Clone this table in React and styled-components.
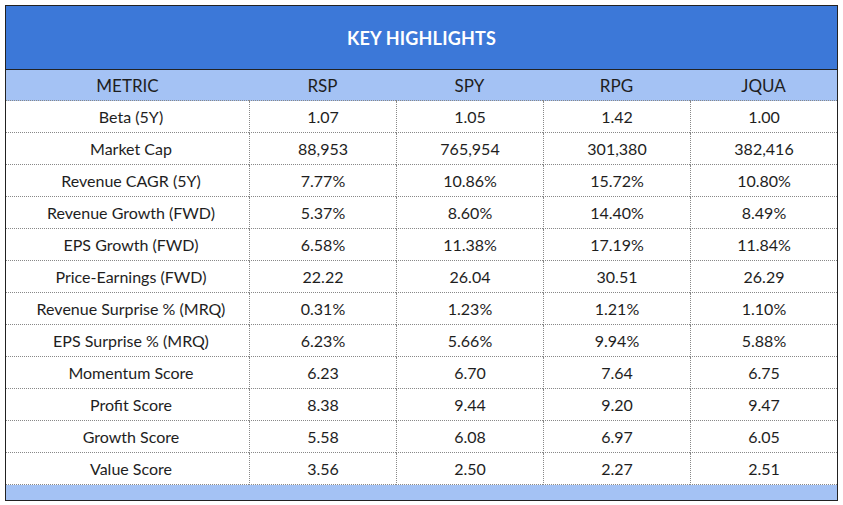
import React from 'react';
import styled, { createGlobalStyle } from 'styled-components';

const GlobalStyle = createGlobalStyle`
  body {
    margin: 0;
    background: #ffffff;
    font-family: Lato, "Open Sans", sans-serif;
  }
`;

const columns = ['METRIC', 'RSP', 'SPY', 'RPG', 'JQUA'];

const rows = [
  ['Beta (5Y)', '1.07', '1.05', '1.42', '1.00'],
  ['Market Cap', '88,953', '765,954', '301,380', '382,416'],
  ['Revenue CAGR (5Y)', '7.77%', '10.86%', '15.72%', '10.80%'],
  ['Revenue Growth (FWD)', '5.37%', '8.60%', '14.40%', '8.49%'],
  ['EPS Growth (FWD)', '6.58%', '11.38%', '17.19%', '11.84%'],
  ['Price-Earnings (FWD)', '22.22', '26.04', '30.51', '26.29'],
  ['Revenue Surprise % (MRQ)', '0.31%', '1.23%', '1.21%', '1.10%'],
  ['EPS Surprise % (MRQ)', '6.23%', '5.66%', '9.94%', '5.88%'],
  ['Momentum Score', '6.23', '6.70', '7.64', '6.75'],
  ['Profit Score', '8.38', '9.44', '9.20', '9.47'],
  ['Growth Score', '5.58', '6.08', '6.97', '6.05'],
  ['Value Score', '3.56', '2.50', '2.27', '2.51'],
];

const Frame = styled.div`
  box-sizing: border-box;
  width: 833px;
  margin: 5px;
  border: 1px solid #222;
`;

const Title = styled.div`
  height: 63px;
  display: flex;
  align-items: center;
  justify-content: center;
  background: #3c78d8;
  border-bottom: 1px solid #222;
  color: #ffffff;
  font-weight: 700;
  font-size: 18px;
  letter-spacing: 0.2px;
`;

const Grid = styled.div`
  display: grid;
  grid-template-columns: 243px repeat(4, 147px);
`;

const HeadCell = styled.div`
  height: 30px;
  display: flex;
  align-items: center;
  justify-content: center;
  background: #a4c2f4;
  border-bottom: 1px dotted #888;
  color: #1e1e1e;
  font-size: 17px;
`;

const Cell = styled.div`
  box-sizing: border-box;
  height: 32px;
  display: flex;
  align-items: center;
  justify-content: center;
  padding-left: ${(p) => (p.$first ? '7px' : '0')};
  border-bottom: 1px dotted #888;
  border-left: ${(p) => (p.$first ? 'none' : '1px dotted #888')};
  color: #1e1e1e;
  font-size: 16px;
`;

const Footer = styled.div`
  height: 15px;
  background: #a4c2f4;
`;

export default function App() {
  return (
    <>
      <GlobalStyle />
      <Frame>
        <Title>KEY HIGHLIGHTS</Title>
        <Grid>
          {columns.map((c) => (
            <HeadCell key={c}>{c}</HeadCell>
          ))}
          {rows.map((r) =>
            r.map((v, i) => (
              <Cell key={r[0] + i} $first={i === 0}>
                {v}
              </Cell>
            ))
          )}
        </Grid>
        <Footer />
      </Frame>
    </>
  );
}
